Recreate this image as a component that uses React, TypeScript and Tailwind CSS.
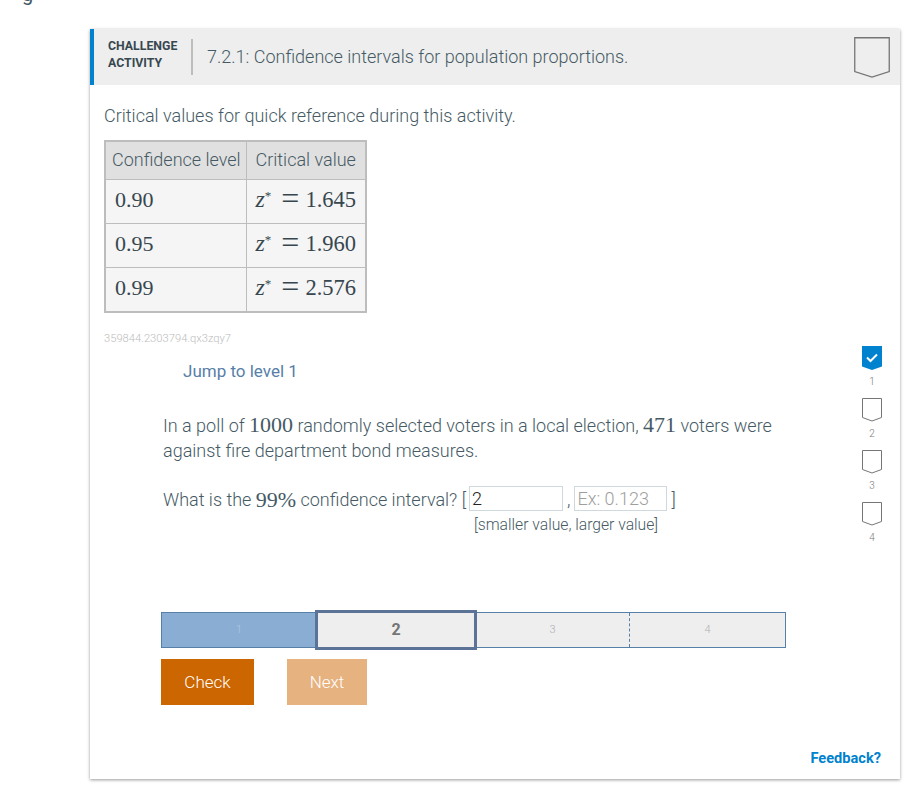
const math = { fontFamily: '"Liberation Serif", serif' };

function Shield({ className }: { className?: string }) {
  return (
    <svg viewBox="0 0 36 41" className={className} fill="none">
      <path d="M0.75 0.75H35.25V34.5L18 40L0.75 34.5Z" stroke="#757575" strokeWidth="1.3" />
    </svg>
  );
}

function Level({ n, done }: { n: number; done?: boolean }) {
  return (
    <div className="flex h-[52px] flex-col items-center">
      {done ? (
        <svg viewBox="0 0 20 24" className="h-6 w-5">
          <path d="M0 0H20V20.5L10 24L0 20.5Z" fill="#0082ce" />
          <path d="M5 11.5L8.5 15L15 8.5" stroke="#fff" strokeWidth="2" fill="none" />
        </svg>
      ) : (
        <svg viewBox="0 0 20 24" className="h-6 w-5" fill="none">
          <path d="M0.5 0.5H19.5V19.5L10 23L0.5 19.5Z" stroke="#757575" />
        </svg>
      )}
      <span className="mt-[6px] text-[10px] leading-[12px] text-[#7a7a7a]">{n}</span>
    </div>
  );
}

function Row({ level, z, last }: { level: string; z: string; last?: boolean }) {
  return (
    <tr className={last ? "h-[45px] bg-[#f5f5f5]" : "h-11 bg-[#f5f5f5]"}>
      <td className="border border-[#bdbdbd] pb-[3px] pl-[9px] text-[22px] leading-[22px] text-[#37474f]" style={math}>{level}</td>
      <td className="border border-[#bdbdbd] pb-[3px] pl-[9px] text-[22.5px] leading-[22px] whitespace-nowrap text-[#37474f]" style={math}>
        <i className="text-[24px] leading-[0]">z</i><sup className="text-[13px] leading-[0]">*</sup><span className="ml-[10px] align-[-2px] text-[32px] leading-[0] font-light">=</span><span className="ml-[6px]">{z}</span>
      </td>
    </tr>
  );
}

export default function App() {
  return (
    <div className="h-[796px] w-[910px] overflow-hidden bg-white font-['Roboto',sans-serif] font-light text-[#455a64]">
      <div className="h-[29px] overflow-hidden">
        <p className="-mt-[16px] pl-[22px] text-[20px] leading-[20px] font-normal">g</p>
      </div>
      <div className="relative ml-[90px] flex h-[750px] w-[810px] flex-col bg-white shadow-[0_1px_3px_rgba(0,0,0,0.4)]">
        <header className="flex h-[56px] items-center border-l-4 border-[#0082ce] bg-[#eeeeee] pr-[10px]">
          <div className="mb-[4px] ml-[14px] w-[70px] text-[12.3px] leading-[17px] font-bold whitespace-nowrap text-[#37474f]">
            CHALLENGE<br />ACTIVITY
          </div>
          <div className="mr-[14px] ml-[13px] h-[36px] w-[2px] bg-[#bdbdbd]" />
          <h1 className="mb-[2px] flex-1 text-[18px]">7.2.1: Confidence intervals for population proportions.</h1>
          <Shield className="mt-[1px] h-[41px] w-[36px]" />
        </header>

        <div className="relative flex-1 px-[14px]">
          <p className="mt-[19px] text-[18px] leading-[24px]">Critical values for quick reference during this activity.</p>
          <table className="mt-[12px] w-[263px] border-collapse border-2 border-[#bdbdbd]">
            <thead>
              <tr className="h-[38px] bg-[#e0e0e0] text-left">
                <th className="w-[141px] border border-[#bdbdbd] pb-[1px] pl-[6px] text-[18px] font-light whitespace-nowrap">Confidence level</th>
                <th className="border border-[#bdbdbd] pb-[1px] pl-[9px] text-[18px] font-light whitespace-nowrap">Critical value</th>
              </tr>
            </thead>
            <tbody>
              <Row level="0.90" z="1.645" />
              <Row level="0.95" z="1.960" />
              <Row level="0.99" z="2.576" last />
            </tbody>
          </table>
          <p className="mt-[19px] text-[11.2px] leading-[14px] text-[#bdbdbd]">359844.2303794.qx3zqy7</p>

          <p className="mt-[13px] ml-[79px] text-[17px] leading-[24px] font-normal text-[#5780a8]">Jump to level 1</p>

          <div className="absolute top-[261px] right-[18px] flex w-[20px] flex-col items-center">
            <Level n={1} done />
            <Level n={2} />
            <Level n={3} />
            <Level n={4} />
          </div>

          <div className="mt-[30px] ml-[59px] w-[640px] text-[18px] leading-[25px]">
            <p>
              In a poll of <span className="text-[22px] leading-none" style={math}>1000</span> randomly selected voters in a local election, <span className="text-[22px] leading-none" style={math}>471</span> voters were against fire department bond measures.
            </p>
            <div className="mt-[24px] flex h-[25px] items-center whitespace-nowrap">
              What is the&nbsp;<span className="text-[22px] leading-none" style={math}>99%</span>&nbsp;confidence interval? [
              <span className="mb-[2px] ml-[3px] flex h-[25px] w-[94px] items-center border border-[#cfd8dc] pl-[2px] text-[18px] leading-none text-[#222]">2</span>
              <span className="ml-[4px] self-end">,</span>
              <span className="mb-[2px] ml-[4px] flex h-[25px] w-[93px] items-center border border-[#cfd8dc] pl-[2px] text-[18px] leading-none text-[#9e9e9e]">Ex: 0.123</span>
              <span className="ml-[4px]">]</span>
            </div>
            <p className="mt-[1px] ml-[311px] text-[15.7px] leading-[24px]">[smaller value, larger value]</p>
          </div>

          <div className="relative mt-[75px] ml-[57px] flex h-[36px] w-[625px] border border-[#5780a8] bg-[#eeeeee] text-[11px] text-[#b0b0b0]">
            <div className="flex w-[154px] items-center justify-center bg-[#8aaed3] text-[#b4c6dc]">1</div>
            <div className="z-10 -mx-px -my-[3px] flex w-[162px] shrink-0 items-center justify-center border-[3px] border-[#5a7396] bg-[#eeeeee] pb-[1px] text-[16px] font-bold text-[#757575]">2</div>
            <div className="flex w-[154px] items-center justify-center border-r border-dashed border-[#5780a8]">3</div>
            <div className="flex flex-1 items-center justify-center">4</div>
          </div>

          <div className="mt-[11px] ml-[57px] flex gap-[33px] text-[17px] text-white">
            <button className="h-[46px] w-[93px] bg-[#cc6600] pt-[2px] font-light">Check</button>
            <button className="h-[46px] w-[80px] bg-[#e6b280] pt-[2px] font-light">Next</button>
          </div>

          <a className="absolute right-[19px] bottom-[12px] text-[14.6px] leading-[18px] font-bold text-[#0082ce]">Feedback?</a>
        </div>
      </div>
    </div>
  );
}
